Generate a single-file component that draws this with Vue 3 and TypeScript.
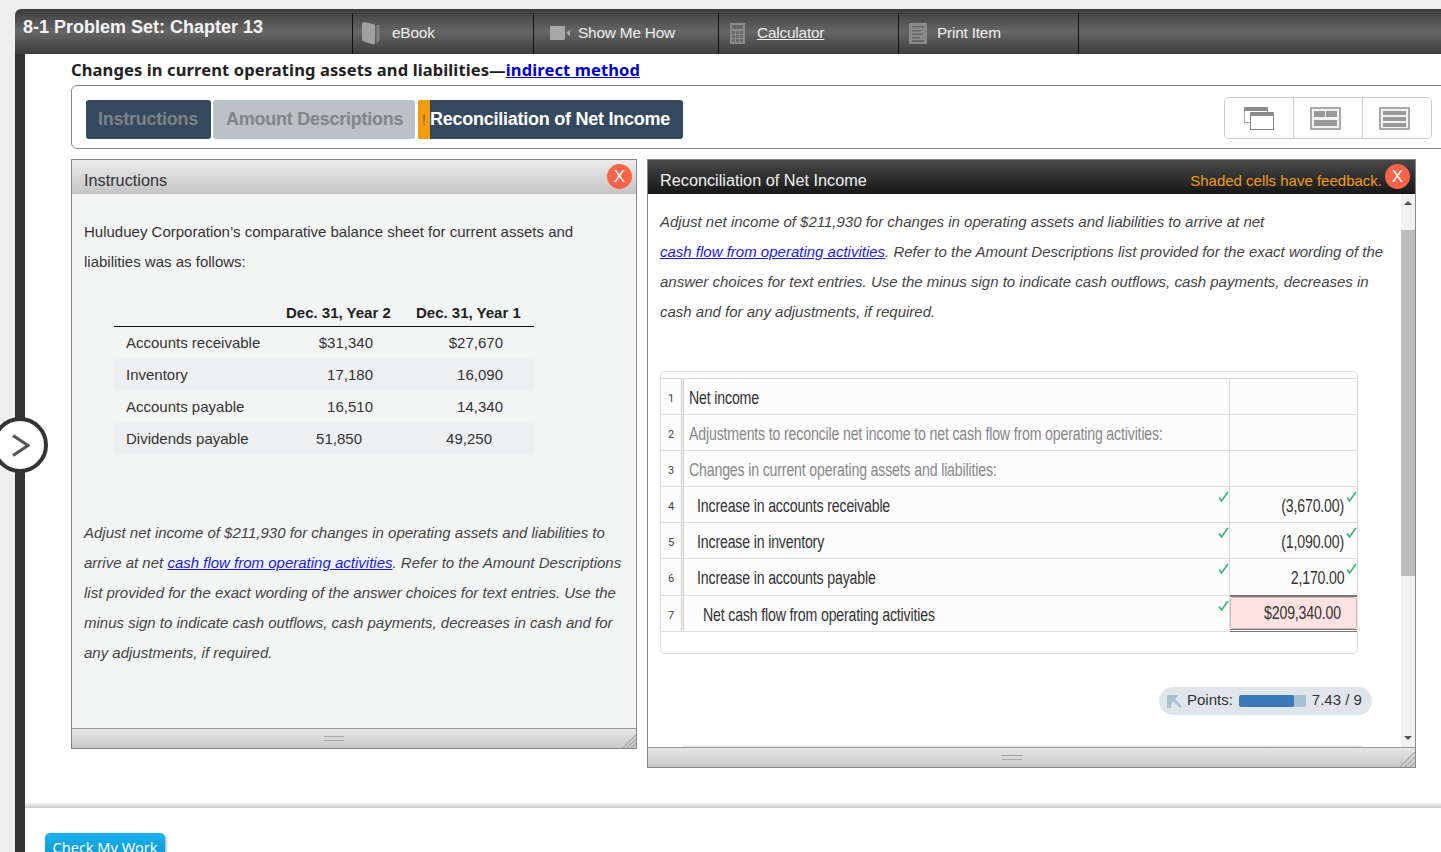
<script setup lang="ts">
interface Row { n: number; label: string; indent: number; value: string; muted?: boolean; check?: boolean; valCheck?: boolean; total?: boolean; h: number }
const rows: Row[] = [
  { n: 1, label: 'Net income', indent: 0, value: '', h: 36 },
  { n: 2, label: 'Adjustments to reconcile net income to net cash flow from operating activities:', indent: 0, value: '', muted: true, h: 36 },
  { n: 3, label: 'Changes in current operating assets and liabilities:', indent: 0, value: '', muted: true, h: 36 },
  { n: 4, label: 'Increase in accounts receivable', indent: 8, value: '(3,670.00)', check: true, valCheck: true, h: 36 },
  { n: 5, label: 'Increase in inventory', indent: 8, value: '(1,090.00)', check: true, valCheck: true, h: 36 },
  { n: 6, label: 'Increase in accounts payable', indent: 8, value: '2,170.00', check: true, valCheck: true, h: 37 },
  { n: 7, label: 'Net cash flow from operating activities', indent: 14, value: '$209,340.00', check: true, total: true, h: 37 }
]
const balances = [
  { name: 'Accounts receivable', y2: '$31,340', y1: '$27,670' },
  { name: 'Inventory', y2: '17,180', y1: '16,090' },
  { name: 'Accounts payable', y2: '16,510', y1: '14,340' },
  { name: 'Dividends payable', y2: '51,850', y1: '49,250', off: true }
]
const tools = [
  { label: 'eBook', w: 181, icon: 'book', pad: 9, gap: 12 },
  { label: 'Show Me How', w: 185, icon: 'video', pad: 16, gap: 7 },
  { label: 'Calculator', w: 180, icon: 'calc', link: true, pad: 11, gap: 12 },
  { label: 'Print Item', w: 180, icon: 'print', pad: 10, gap: 10 }
]
</script>

<template>
  <div class="page">
    <header class="topbar">
      <h1 class="set-title">8-1 Problem Set: Chapter 13</h1>
      <div v-for="t in tools" :key="t.label" class="tool" :style="{ width: t.w + 'px', paddingLeft: t.pad + 'px', gap: t.gap + 'px' }">
        <svg v-if="t.icon === 'book'" class="ico" width="18" height="23" viewBox="0 0 18 23">
          <path d="M0 2 Q0 0 2 0 L13 2.5 L13 21 Q13 23 11 22.5 L2 19.5 Q0 19 0 17 Z" fill="#a0a0a0" />
          <path d="M14.5 3 L17.5 3 L17.5 18 L14.5 22 Z" fill="#808080" />
        </svg>
        <svg v-else-if="t.icon === 'video'" class="ico" width="21" height="14" viewBox="0 0 21 14">
          <rect x="0" y="0" width="15" height="14" rx="1" fill="#a8a8a8" />
          <path d="M16.5 7 L20 3.5 V10.5 Z" fill="#a8a8a8" />
        </svg>
        <svg v-else-if="t.icon === 'calc'" class="ico" width="15" height="21" viewBox="0 0 15 21">
          <rect width="15" height="21" fill="#8a8a8a" />
          <rect x="2" y="2" width="11" height="4" fill="#666" />
          <g fill="#6a6a6a">
            <rect x="2" y="8" width="3" height="3" /><rect x="6" y="8" width="3" height="3" /><rect x="10" y="8" width="3" height="3" />
            <rect x="2" y="12" width="3" height="3" /><rect x="6" y="12" width="3" height="3" /><rect x="10" y="12" width="3" height="3" />
            <rect x="2" y="16" width="3" height="3" /><rect x="6" y="16" width="3" height="3" /><rect x="10" y="16" width="3" height="3" />
          </g>
        </svg>
        <svg v-else class="ico" width="18" height="21" viewBox="0 0 18 21">
          <rect width="18" height="21" fill="#8a8a8a" />
          <g fill="#666">
            <rect x="3" y="3" width="12" height="1.5" /><rect x="3" y="7" width="9" height="1.5" /><rect x="3" y="10.5" width="11" height="1.5" />
            <rect x="3" y="14" width="8" height="1.5" /><rect x="3" y="17" width="12" height="2" />
          </g>
        </svg>
        <span :class="{ under: t.link }">{{ t.label }}</span>
      </div>
    </header>

    <div class="shell">
      <div class="rail"></div>
      <main class="main">
        <section class="workarea">
          <h2 class="qtitle">Changes in current operating assets and liabilities—<a class="qlink">indirect method</a></h2>

          <div class="tabbar">
            <div class="tab tab-navy-dim">Instructions</div>
            <div class="tab tab-grey">Amount Descriptions</div>
            <div class="tab tab-active"><span class="flag">!</span><span>Reconciliation of Net Income</span></div>
            <div class="views">
              <div class="view">
                <svg width="30" height="23" viewBox="0 0 30 23">
                  <rect x="0.5" y="0.5" width="23" height="15" fill="#fff" stroke="#aaa" />
                  <rect x="0" y="0" width="24" height="4" fill="#8a8a8a" />
                  <rect x="6.5" y="5.5" width="23" height="17" fill="#fff" stroke="#888" />
                  <rect x="6" y="5" width="24" height="4" fill="#8a8a8a" />
                </svg>
              </div>
              <div class="view view-shift">
                <svg width="31" height="23" viewBox="0 0 31 23">
                  <rect x="1" y="1" width="29" height="21" fill="#f2f2f2" stroke="#aaa" stroke-width="2" />
                  <rect x="4" y="4" width="11" height="6" fill="#999" /><rect x="16" y="4" width="11" height="6" fill="#999" />
                  <rect x="4" y="13" width="23" height="6" fill="#999" />
                </svg>
              </div>
              <div class="view view-shift">
                <svg width="31" height="23" viewBox="0 0 31 23">
                  <rect x="1" y="1" width="29" height="21" fill="#f2f2f2" stroke="#aaa" stroke-width="2" />
                  <rect x="4" y="4" width="23" height="4" fill="#999" /><rect x="4" y="10" width="23" height="4" fill="#999" />
                  <rect x="4" y="16" width="23" height="4" fill="#999" />
                </svg>
              </div>
            </div>
          </div>

          <div class="panels">
            <section class="panel panel-left">
              <div class="phead phead-light"><span>Instructions</span><span class="close close-l">X</span></div>
              <div class="pbody-left">
                <p class="intro">Huluduey Corporation’s comparative balance sheet for current assets and liabilities was as follows:</p>
                <div class="bal">
                  <div class="bal-row bal-head"><span></span><span class="c1">Dec. 31, Year 2</span><span class="c2">Dec. 31, Year 1</span></div>
                  <div v-for="b in balances" :key="b.name" class="bal-row" :class="{ off: b.off }">
                    <span>{{ b.name }}</span><span class="num1">{{ b.y2 }}</span><span class="num2">{{ b.y1 }}</span>
                  </div>
                </div>
                <p class="adjust">Adjust net income of $211,930 for changes in operating assets and liabilities to arrive at net <a class="cash">cash flow from operating activities</a>. Refer to the Amount Descriptions list provided for the exact wording of the answer choices for text entries. Use the minus sign to indicate cash outflows, cash payments, decreases in cash and for any adjustments, if required.</p>
              </div>
              <div class="pfoot">
                <span class="grip"></span>
                <svg class="resize" width="14" height="14" viewBox="0 0 14 14"><path d="M1 14 L14 1 M5 14 L14 5 M9 14 L14 9" stroke="#aaa" stroke-width="1.2" /></svg>
              </div>
            </section>

            <section class="panel panel-right">
              <div class="phead phead-dark">
                <span>Reconciliation of Net Income</span>
                <span class="shaded">Shaded cells have feedback.</span>
                <span class="close close-r">X</span>
              </div>
              <div class="pbody-right">
                <div class="scrollcontent">
                  <p class="adjust-r">Adjust net income of $211,930 for changes in operating assets and liabilities to arrive at net<br /><a class="cash">cash flow from operating activities</a>. Refer to the Amount Descriptions list provided for the exact wording of the answer choices for text entries. Use the minus sign to indicate cash outflows, cash payments, decreases in cash and for any adjustments, if required.</p>
                  <div class="sheet">
                    <div v-for="r in rows" :key="r.n" class="srow" :style="{ height: r.h + 'px' }">
                      <div class="sn">{{ r.n }}</div>
                      <div class="slabel" :class="{ muted: r.muted }" :style="{ paddingLeft: 5 + r.indent + 'px' }">
                        <span class="narrow">{{ r.label }}</span>
                        <svg v-if="r.check" class="check" width="11" height="11" viewBox="0 0 11 11"><path d="M1 6.5 L3.5 10 L10 1" fill="none" stroke="#3cb878" stroke-width="1.7" /></svg>
                      </div>
                      <div class="sval" :class="{ total: r.total }">
                        <span v-if="r.total" class="total-box"><span class="narrow num">{{ r.value }}</span></span>
                        <span v-else class="narrow num">{{ r.value }}</span>
                        <svg v-if="r.valCheck" class="check" width="11" height="11" viewBox="0 0 11 11"><path d="M1 6.5 L3.5 10 L10 1" fill="none" stroke="#3cb878" stroke-width="1.7" /></svg>
                      </div>
                    </div>
                  </div>
                  <div class="points-wrap">
                    <div class="points">
                      <svg class="pt-ico" width="15" height="13" viewBox="0 0 15 13"><path d="M0 0 H12 L8 4 L15 11 L13 13 L6 6 L4 9 L4 13 H0 Z" fill="#a9c1d1" /></svg>
                      <span class="pt-text">Points:</span>
                      <span class="bar"><span class="fill" :style="{ width: (7.43 / 9) * 100 + '%' }"></span></span>
                      <span class="pt-text">7.43 / 9</span>
                    </div>
                  </div>
                  <div class="next-card"></div>
                </div>
                <div class="scrollbar">
                  <span class="arrow up"></span>
                  <div class="track"><div class="thumb"></div></div>
                  <span class="arrow down"></span>
                </div>
              </div>
              <div class="pfoot">
                <span class="grip"></span>
                <svg class="resize" width="16" height="16" viewBox="0 0 16 16"><path d="M1 16 L16 1 M6 16 L16 6 M11 16 L16 11" stroke="#aaa" stroke-width="1.2" /></svg>
              </div>
            </section>
          </div>
        </section>

        <footer class="actions">
          <button class="check-work">Check My Work</button>
        </footer>
      </main>
    </div>

    <div class="nav-circle">
      <svg width="18" height="23" viewBox="0 0 18 23"><path d="M1 1.5 L16 11.5 L1 21.5" fill="none" stroke="#555" stroke-width="3.2" /></svg>
    </div>
  </div>
</template>

<style>
html, body { margin: 0; padding: 0; background: #eee; }
</style>

<style scoped>
.page {
  position: relative;
  width: 1441px;
  height: 852px;
  overflow: hidden;
  box-sizing: border-box;
  padding: 9px 0 0 15px;
  background: #eee;
  font-family: "Liberation Sans", Arial, sans-serif;
  color: #333;
}
.topbar {
  display: flex;
  align-items: stretch;
  height: 45px;
  border-radius: 6px 0 0 0;
  background: linear-gradient(to bottom, #3c3c3c 0%, #666 50%, #3c3c3c 100%);
  color: #fff;
}
.set-title {
  width: 338px;
  box-sizing: border-box;
  margin: 4px 0 0;
  padding: 4px 0 0 8px;
  font-size: 18px;
  line-height: 21px;
  font-weight: 700;
  color: #f4f4f4;
  border-right: 1px solid #111;
}
.tool {
  display: flex;
  align-items: center;
  box-sizing: border-box;
  margin-top: 4px;
  padding-bottom: 1px;
  border-right: 1px solid #111;
  font-size: 15.4px;
  color: #eee;
  letter-spacing: -0.2px;
}
.under { text-decoration: underline; }
.ico { flex: none; }
.shell { display: flex; height: 798px; }
.rail { width: 10px; background: #333; flex: none; }
.main { flex: 1; background: #fff; display: flex; flex-direction: column; min-width: 0; overflow: hidden; }
.workarea {
  flex: none;
  height: 754px;
  box-sizing: border-box;
  padding: 7px 0 0 46px;
  background: linear-gradient(to bottom, #fff, #c8c8c8) bottom / 100% 6px no-repeat;
}
.qtitle {
  margin: 0;
  height: 18px;
  font-family: "Noto Sans", sans-serif;
  font-size: 16.5px;
  line-height: 18px;
  font-weight: 700;
  letter-spacing: 0.12px;
  color: #222;
  white-space: nowrap;
}
.qlink { color: #00c; text-decoration: underline; }
.tabbar {
  display: flex;
  align-items: flex-start;
  box-sizing: border-box;
  width: 1400px;
  height: 64px;
  margin-top: 6px;
  padding: 14px 0 0 14px;
  border: 1px solid #888;
  border-radius: 6px;
  gap: 2px;
}
.tab {
  display: flex;
  align-items: center;
  height: 39px;
  box-sizing: border-box;
  border-radius: 3px;
  font-size: 18px;
  font-weight: 700;
  letter-spacing: -0.25px;
  white-space: nowrap;
}
.tab-navy-dim { width: 125px; padding-left: 12px; background: #34495e; color: #7c8289; }
.tab-grey { width: 202px; padding-left: 13px; background: #bcc1c5; color: #848484; }
.tab-active { width: 265px; margin-left: 1px; background: #34495e; color: #fff; overflow: hidden; }
.flag { display: flex; align-items: center; justify-content: center; flex: none; width: 12px; height: 100%; background: #f39c12; color: #8a6220; font-size: 14px; font-weight: 400; letter-spacing: 0; }
.views {
  display: flex;
  margin-left: 539px;
  height: 42px;
  margin-top: -3px;
  box-sizing: border-box;
  border: 1px solid #ccc;
  border-radius: 5px;
}
.view { display: flex; align-items: center; justify-content: center; box-sizing: border-box; width: 69px; height: 100%; border-right: 1px solid #ccc; }
.view:last-child { border-right: 0; width: 68px; }
.view-shift { padding-right: 5px; }
.panels { display: flex; align-items: flex-start; gap: 10px; margin-top: 10px; }
.panel { box-sizing: border-box; border: 1px solid #888; flex: none; display: flex; flex-direction: column; }
.panel-left { width: 566px; height: 590px; background: #f3f5f5; }
.panel-right { width: 769px; height: 609px; background: #fff; }
.phead {
  position: relative;
  display: flex;
  align-items: center;
  height: 34px;
  flex: none;
  box-sizing: border-box;
  padding: 7px 0 0 12px;
  font-size: 16.25px;
}
.phead-light { background: linear-gradient(to bottom, #ececec, #c4c4c4); color: #333; }
.phead-dark { background: linear-gradient(to bottom, #4a4a4a, #161616); color: #f2f2f2; }
.shaded { position: absolute; right: 33px; top: 12px; font-size: 15px; line-height: 18px; color: #f39c12; }
.close {
  position: absolute;
  top: 4px;
  display: flex;
  align-items: center;
  justify-content: center;
  width: 25px;
  height: 25px;
  border-radius: 50%;
  background: #f96449;
  color: #fff;
  font-size: 17px;
}
.close-l { right: 4px; }
.close-r { right: 5px; }
.pbody-left { flex: 1; padding: 23px 12px 0; color: #333; min-height: 0; font-size: 15px; }
.intro { margin: 0; width: 520px; line-height: 30px; }
.bal { width: 420px; margin: 23px 0 0 30px; }
.bal-row { display: grid; grid-template-columns: 148px 99px 130px; align-items: center; height: 32px; padding: 0 0 2px 12px; box-sizing: border-box; }
.bal-row:nth-child(3), .bal-row:nth-child(5) { background: #eeeff0; }
.bal-head { height: 27px; font-weight: 700; color: #222; border-bottom: 1px solid #111; padding-bottom: 2px; }
.c1, .c2 { white-space: nowrap; }
.c1 { padding-left: 12px; }
.c2 { padding-left: 43px; }
.num1, .num2 { text-align: right; }
.off .num1, .off .num2 { padding-right: 11px; }
.adjust { margin: 63px 0 0; font-style: italic; line-height: 30px; color: #444; width: 544px; }
.adjust-r { margin: 0; font-style: italic; line-height: 30px; font-size: 15px; color: #444; width: 730px; }
.cash { color: #1a1ae6; text-decoration: underline; }
.pfoot {
  position: relative;
  display: flex;
  align-items: center;
  justify-content: center;
  flex: none;
  height: 19px;
  padding-right: 40px;
  border-top: 1px solid #999;
  background: linear-gradient(to bottom, #e6e6e6, #c8c8c8);
}
.grip { display: block; width: 20px; height: 3px; border-top: 1px solid #aaa; border-bottom: 1px solid #aaa; }
.resize { position: absolute; right: 0; bottom: 0; }
.pbody-right { flex: 1; display: flex; min-height: 0; overflow: hidden; }
.scrollcontent { flex: 1; padding: 13px 0 0 12px; min-width: 0; position: relative; overflow: hidden; }
.sheet {
  width: 698px;
  box-sizing: border-box;
  margin-top: 44px;
  height: 283px;
  padding-top: 6px;
  border: 1px solid #ddd;
  border-radius: 5px;
  background: #fff;
}
.srow { display: grid; grid-template-columns: 23px minmax(0, 1fr) 127px; border-top: 1px solid #ddd; box-sizing: border-box; background: #fcfcfc; }
.srow:last-child { border-bottom: 1px solid #ddd; }
.sn { display: flex; align-items: center; justify-content: center; padding-top: 3px; box-sizing: border-box; border-right: 3px double #ccc; font-family: Roboto, sans-serif; font-size: 11px; color: #444; }
.slabel { position: relative; display: flex; align-items: center; box-sizing: border-box; padding-top: 3px; border-right: 1px solid #ddd; color: #333; min-width: 0; }
.narrow { display: inline-block; flex: none; font-size: 18px; white-space: nowrap; letter-spacing: -0.2px; transform: scaleX(0.785); transform-origin: left center; }
.narrow.num { transform-origin: right center; }
.muted { color: #888; }
.sval { position: relative; display: flex; align-items: center; justify-content: flex-end; padding: 3px 13px 0 0; color: #333; }
.sval.total { padding: 0; margin: -1px 0 -1px; border-top: 2px solid #777; border-bottom: 3px double #777; }
.total-box {
  display: flex;
  align-items: center;
  justify-content: flex-end;
  width: 100%;
  height: 100%;
  box-sizing: border-box;
  padding-right: 15px;
  background: #fee2e2;
  border: 1px solid #d9b6b6;
  border-radius: 3px;
}
.check { position: absolute; right: 0; top: 4px; }
.points-wrap { display: flex; justify-content: flex-end; width: 712px; margin-top: 33px; }
.points {
  display: flex;
  align-items: center;
  gap: 6px;
  height: 28px;
  width: 213px;
  box-sizing: border-box;
  padding: 0 9px 0 8px;
  border-radius: 14px;
  background: #dfe6ea;
  font-size: 15px;
}
.pt-ico { margin-right: -1px; }
.pt-text { margin-top: -3px; }
.bar { display: block; flex: none; width: 67px; height: 12px; border-radius: 2px; background: #a8c0d2; overflow: hidden; }
.fill { display: block; height: 100%; border-radius: 2px; background: #3c79b8; }
.next-card { width: 685px; height: 10px; margin: 30px 0 0 20px; background: #e6ecec; border-radius: 6px 6px 0 0; }
.scrollbar { width: 14px; flex: none; display: flex; flex-direction: column; align-items: center; background: #f1f1f1; }
.arrow { display: block; flex: none; width: 0; height: 0; border-left: 4px solid transparent; border-right: 4px solid transparent; margin: 7px 0; }
.arrow.up { border-bottom: 4px solid #555; }
.arrow.down { border-top: 4px solid #555; }
.track { flex: 1; width: 100%; }
.thumb { width: 100%; height: 346px; margin-top: 18px; background: #bdbdbd; }
.actions { flex: none; height: 44px; padding: 25px 0 0 20px; box-sizing: border-box; overflow: visible; }
.check-work {
  display: block;
  width: 120px;
  height: 28px;
  padding: 0;
  box-sizing: border-box;
  text-align: center;
  border: 0;
  border-radius: 5px 5px 0 0;
  background: linear-gradient(to bottom, #1ab3ee, #0a93d6);
  box-shadow: 1px 1px 3px #999;
  color: #fff;
  font-family: "Noto Sans", sans-serif;
  font-size: 14.5px;
  line-height: 20px;
}
.nav-circle {
  position: absolute;
  left: -8px;
  top: 417px;
  display: flex;
  align-items: center;
  justify-content: center;
  width: 56px;
  height: 56px;
  box-sizing: border-box;
  padding-left: 2px;
  border: 4px solid #333;
  border-radius: 50%;
  background: #fff;
}
</style>
